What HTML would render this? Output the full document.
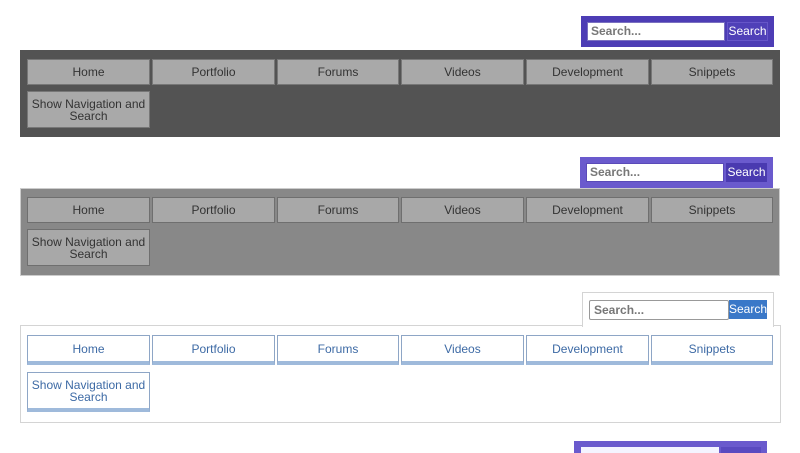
<!DOCTYPE html>
<html><head><style>
*{margin:0;padding:0;box-sizing:border-box}
body{width:800px;height:450px;overflow:hidden;background:#fff;font-family:"Liberation Sans",sans-serif;font-size:12px;position:relative}
.a{position:absolute}
.b{position:absolute;display:flex;align-items:center;justify-content:center;text-align:center;line-height:12px}
.d .b{background:#a9a9a9;color:#333;border:1px solid #777}
.g .b{background:#a8a8a8;color:#333;border:1px solid #6f6f6f}
.w .b{background:#fff;color:#3d6aa5;border:1px solid #8ea6c6;border-bottom:4px solid #9fbadb}
.s{color:#777;font-weight:bold;font-size:12px;line-height:13px}
</style></head><body>
<!-- section 1 -->
<div class="a" style="left:581px;top:16px;width:193px;height:31px;background:#4d3db5"></div>
<div class="a s" style="left:587px;top:22px;width:138px;height:19px;background:#fff;border:1px solid #7a70c0;padding:2px 3px">Search...</div>
<div class="a" style="left:727px;top:22px;width:41px;height:19px;background:#4f40b8;border:1px solid #6656c8;color:#fff;line-height:17px;text-align:center">Search</div>
<div class="a d" style="left:20px;top:50px;width:760px;height:87px;background:#535353">
<div class="b" style="left:7px;top:9px;width:123px;height:26px">Home</div>
<div class="b" style="left:132px;top:9px;width:123px;height:26px">Portfolio</div>
<div class="b" style="left:257px;top:9px;width:122px;height:26px">Forums</div>
<div class="b" style="left:381px;top:9px;width:123px;height:26px">Videos</div>
<div class="b" style="left:506px;top:9px;width:123px;height:26px">Development</div>
<div class="b" style="left:631px;top:9px;width:122px;height:26px">Snippets</div>
<div class="b" style="left:7px;top:41px;width:123px;height:37px">Show Navigation and<br>Search</div>
</div>
<!-- section 2 -->
<div class="a" style="left:580px;top:157px;width:193px;height:31px;background:#6a5acd"></div>
<div class="a s" style="left:586px;top:163px;width:138px;height:19px;background:#fff;border:1px solid #5a4ab8;padding:2px 3px">Search...</div>
<div class="a" style="left:726px;top:163px;width:41px;height:19px;background:#4a3ab0;color:#fff;line-height:19px;text-align:center">Search</div>
<div class="a g" style="left:20px;top:188px;width:760px;height:88px;background:#888;border:1px solid #ccc">
<div class="b" style="left:6px;top:8px;width:123px;height:26px">Home</div>
<div class="b" style="left:131px;top:8px;width:123px;height:26px">Portfolio</div>
<div class="b" style="left:256px;top:8px;width:122px;height:26px">Forums</div>
<div class="b" style="left:380px;top:8px;width:123px;height:26px">Videos</div>
<div class="b" style="left:505px;top:8px;width:123px;height:26px">Development</div>
<div class="b" style="left:630px;top:8px;width:122px;height:26px">Snippets</div>
<div class="b" style="left:6px;top:40px;width:123px;height:37px">Show Navigation and<br>Search</div>
</div>
<!-- section 3 -->
<div class="a w" style="left:20px;top:325px;width:761px;height:98px;background:#fff;border:1px solid #d4d4d4">
<div class="b" style="left:6px;top:9px;width:123px;height:30px">Home</div>
<div class="b" style="left:131px;top:9px;width:123px;height:30px">Portfolio</div>
<div class="b" style="left:256px;top:9px;width:122px;height:30px">Forums</div>
<div class="b" style="left:380px;top:9px;width:123px;height:30px">Videos</div>
<div class="b" style="left:505px;top:9px;width:123px;height:30px">Development</div>
<div class="b" style="left:630px;top:9px;width:122px;height:30px">Snippets</div>
<div class="b" style="left:6px;top:46px;width:123px;height:40px">Show Navigation and<br>Search</div>
</div>
<div class="a" style="left:582px;top:292px;width:192px;height:35px;background:#fff;border:1px solid #d4d4d4;border-bottom:none"></div>
<div class="a s" style="left:589px;top:300px;width:140px;height:20px;background:#fff;border:1px solid #999;border-radius:2px;padding:3px 4px">Search...</div>
<div class="a" style="left:729px;top:300px;width:38px;height:19px;background:#3a78c8;color:#fff;line-height:19px;text-align:center">Search</div>
<!-- section 4 -->
<div class="a" style="left:574px;top:441px;width:193px;height:12px;background:#6a5acd"></div>
<div class="a" style="left:581px;top:447px;width:138px;height:6px;background:#f4f4ff"></div>
<div class="a" style="left:721px;top:447px;width:40px;height:6px;background:#5a4ac0"></div>
</body></html>
